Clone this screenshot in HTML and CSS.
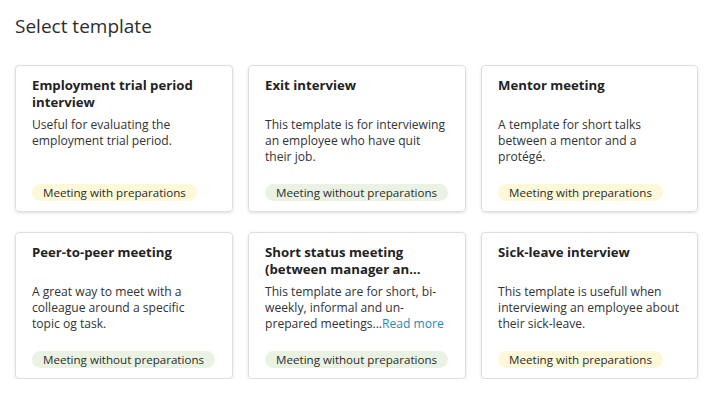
FILE: index.html
```html
<!DOCTYPE html>
<html lang="en">
<head>
<meta charset="utf-8">
<title>Select template</title>
<link rel="stylesheet" href="styles.css">
</head>
<body>
<main class="page">
  <h1 class="page-title">Select template</h1>
  <div class="grid">
    <article class="card">
      <h2 class="card-title">Employment trial period interview</h2>
      <p class="card-desc">Useful for evaluating the employment trial period.</p>
      <span class="badge badge-with">Meeting with preparations</span>
    </article>
    <article class="card">
      <h2 class="card-title">Exit interview</h2>
      <p class="card-desc">This template is for interviewing an employee who have quit their job.</p>
      <span class="badge badge-without">Meeting without preparations</span>
    </article>
    <article class="card">
      <h2 class="card-title">Mentor meeting</h2>
      <p class="card-desc">A template for short talks between a mentor and a protégé.</p>
      <span class="badge badge-with">Meeting with preparations</span>
    </article>
    <article class="card">
      <h2 class="card-title">Peer-to-peer meeting</h2>
      <p class="card-desc">A great way to meet with a colleague around a specific topic og task.</p>
      <span class="badge badge-without">Meeting without preparations</span>
    </article>
    <article class="card">
      <h2 class="card-title">Short status meeting (between manager an...</h2>
      <p class="card-desc">This template are for short, bi-weekly, informal and un-prepared meetings...<a class="read-more" href="#">Read more</a></p>
      <span class="badge badge-without">Meeting without preparations</span>
    </article>
    <article class="card">
      <h2 class="card-title">Sick-leave interview</h2>
      <p class="card-desc">This template is usefull when interviewing an employee about their sick-leave.</p>
      <span class="badge badge-with">Meeting with preparations</span>
    </article>
  </div>
</main>
</body>
</html>
```

FILE: styles.css
```css
* { box-sizing: border-box; }
html, body { margin: 0; padding: 0; background: #fff; }
body {
  font-family: "Open Sans", "Noto Sans", sans-serif;
  color: #2b2b2b;
}
.page {
  padding: 13px 22px 0 15px;
}
.page-title {
  margin: 0;
  font-size: 19px;
  font-weight: 400;
  line-height: 26px;
  color: #2d2d2d;
}
.grid {
  margin-top: 26px;
  display: grid;
  grid-template-columns: repeat(3, 1fr);
  column-gap: 15px;
  row-gap: 20px;
}
.card {
  height: 147px;
  border: 1px solid #dedede;
  border-radius: 4px;
  box-shadow: 0 1px 3px rgba(0, 0, 0, 0.12);
  padding: 11px 17px 10px 16px;
  display: flex;
  flex-direction: column;
  align-items: flex-start;
}
.card-title {
  margin: 0;
  font-size: 13.2px;
  font-weight: 700;
  line-height: 17px;
  height: 34px;
  color: #222;
  overflow: hidden;
}
.card-desc {
  margin: 6px 0 0 0;
  font-size: 12.1px;
  line-height: 16px;
  color: #333;
}
.read-more {
  color: #1f8bb3;
  text-decoration: none;
}
.badge {
  margin-top: auto;
  display: inline-block;
  white-space: nowrap;
  font-size: 11.6px;
  line-height: 17px;
  padding: 0 11px;
  border-radius: 9px;
  color: #2b2b2b;
}
.badge-with { background: #fcf8d8; }
.badge-without { background: #eaf3e3; }
```
